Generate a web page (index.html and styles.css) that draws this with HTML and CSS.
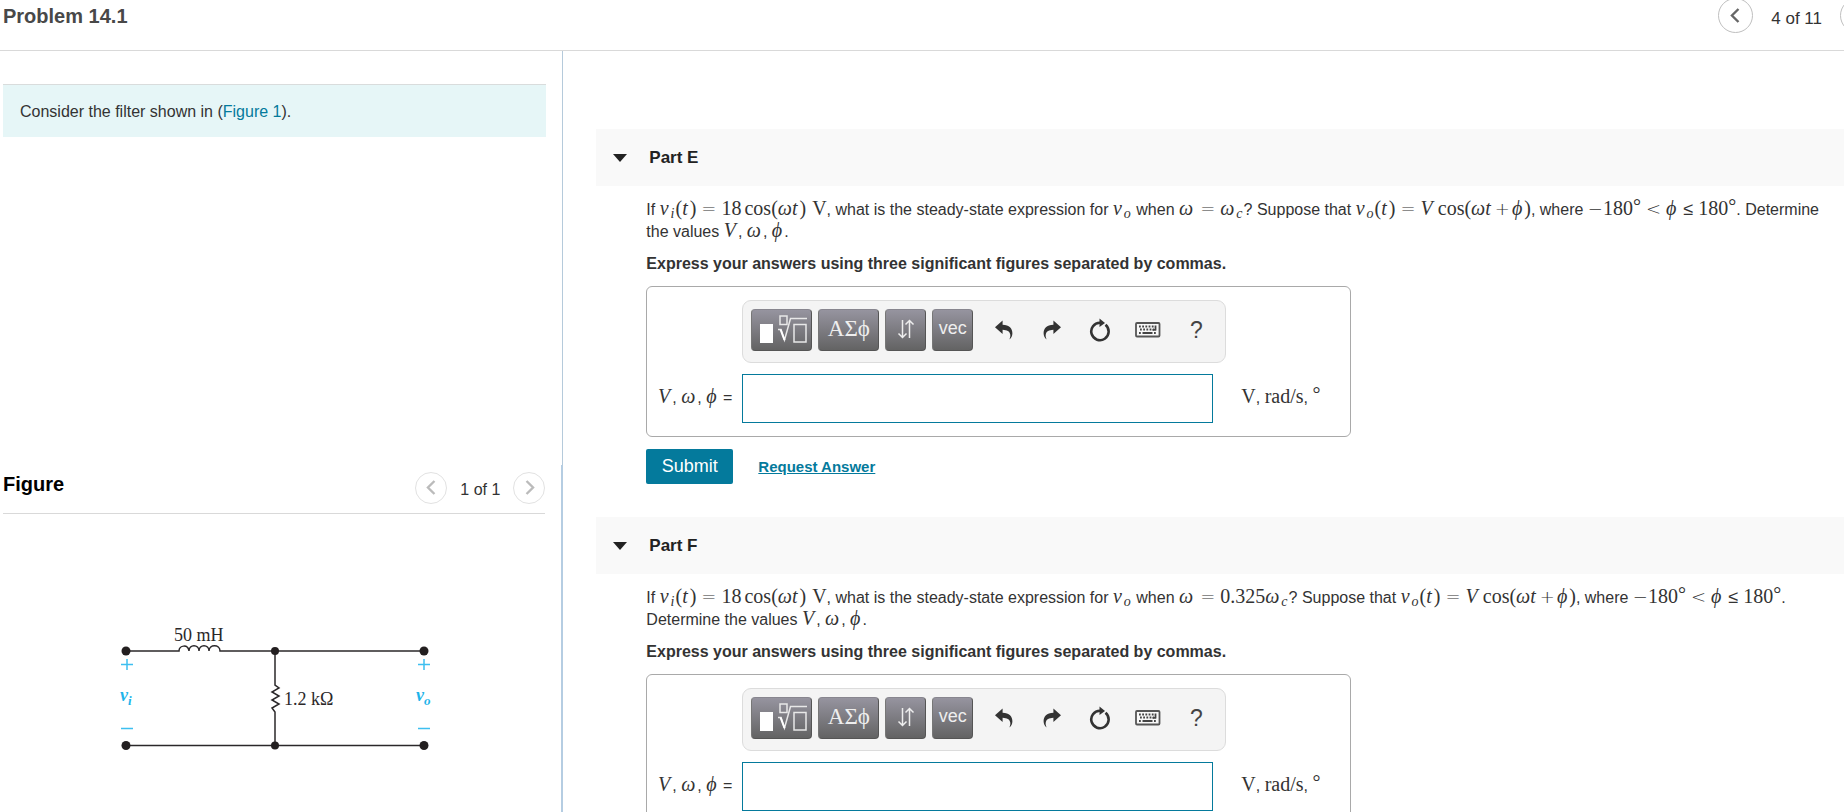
FILE: index.html
```html
<!DOCTYPE html>
<html lang="en">
<head>
<meta charset="utf-8">
<title>Problem 14.1</title>
<link rel="stylesheet" href="styles.css">
</head>
<body>
<svg class="sprite" aria-hidden="true">
  <symbol id="left" viewBox="0 0 16 16"><path d="M10.500 2.500 5 8l5.500 5.500" fill="none" stroke="currentColor" stroke-width="2"/></symbol>
  <symbol id="right" viewBox="0 0 16 16"><path d="M5.500 2.500 11 8l-5.500 5.500" fill="none" stroke="currentColor" stroke-width="2"/></symbol>
  <symbol id="template" viewBox="0 0 50 30">
    <rect x="3" y="10" width="13" height="19" fill="#fff"/>
    <g fill="none" stroke="#e8e8e8" stroke-width="1.500"><rect x="23" y="2" width="7" height="8.500"/><path d="M21 15.500h3l3.500 10.500 6-21.500H50"/><rect x="37" y="10.500" width="12" height="17.500"/></g>
    <path d="M23.500 15.500l4 10.500" stroke="#fff" stroke-width="2"/>
  </symbol>
  <symbol id="arrows" viewBox="0 0 18 22"><path d="M5.500 2v17M1.500 15.500l4 4 4-4M12.500 20V3M8.500 6.500l4-4 4 4" fill="none" stroke="#eee" stroke-width="1.500"/></symbol>
  <symbol id="undo" viewBox="0 0 18 20"><path d="M0 7.200 7.600.5v4.300c6.800.3 9.800 3.600 9.800 8.500 0 2.500-1 4.600-3 6.200.8-2 1.200-3.700.8-5.300-.7-2.900-3-4.300-7.600-4.500V14z" fill="#333"/></symbol>
  <symbol id="reset" viewBox="0 0 22 24"><path d="M16.500 6.800A8.700 8.700 0 1 1 11 4.800" fill="none" stroke="#333" stroke-width="2.600"/><path d="M10.500.5 16 5l-5.500 4z" fill="#333"/></symbol>
  <symbol id="keys" viewBox="0 0 26 16">
    <rect x="1" y="1" width="23.500" height="13.500" rx="1" fill="#f8f8f8" stroke="#555" stroke-width="1.800"/>
    <path d="M4 4.500h15M5 7.500h14M4 11h2M19 11h2" stroke="#444" stroke-width="1.800" stroke-dasharray="1.800 1.400"/>
    <path d="M7.500 11h10M17.500 7.800h3.500M20.500 3.500v5" stroke="#444" stroke-width="1.800"/>
  </symbol>
</svg>

<header class="topbar">
  <h1 class="title">Problem 14.1</h1>
  <nav class="pager pager-top">
    <button class="round" aria-label="Previous problem"><svg class="chev"><use href="#left"/></svg></button>
    <span class="count">4 of 11</span>
    <button class="round" aria-label="Next problem"><svg class="chev"><use href="#right"/></svg></button>
  </nav>
</header>

<div class="panes">
  <aside class="side">
    <section class="intro">
      <p class="note">Consider the filter shown in (<a class="link" href="#figure">Figure 1</a>).</p>
    </section>
    <section class="figure" id="figure">
      <div class="fighead">
        <h2 class="figtitle">Figure</h2>
        <nav class="pager pager-fig">
          <button class="round faint" aria-label="Previous figure"><svg class="chev"><use href="#left"/></svg></button>
          <span class="count">1 of 1</span>
          <button class="round faint" aria-label="Next figure"><svg class="chev"><use href="#right"/></svg></button>
        </nav>
      </div>
      <svg class="circuit" viewBox="115 620 325 140" role="img" aria-label="Filter circuit">
        <g fill="none" stroke="#2b282a" stroke-width="1.500">
          <path d="M126 652h53c0-6 9-7 10 0c0-7 10-7 10 0c0-7 10-7 10 0c0-7 11-7 11 0h204M126 746.500h298"/>
          <path d="M275 652v34l4 3-7 4 7 4-7 4 7 4-7 4 3 4v33.500"/>
        </g>
        <g fill="#231f20"><circle cx="126" cy="652" r="4.500"/><circle cx="275" cy="652" r="4"/><circle cx="424" cy="652" r="4.500"/><circle cx="126" cy="746.500" r="4.500"/><circle cx="275" cy="746.500" r="4"/><circle cx="424" cy="746.500" r="4.500"/></g>
        <path d="M121 665.500h12M127 660v11M418 665.500h12M424 660v11M121 729.500h12M418 729.500h12" stroke="#3dbff0" stroke-width="1.500"/>
        <text class="part-label" x="174" y="642">50 mH</text>
        <text class="part-label" x="284" y="706">1.2 kΩ</text>
        <text class="volt" x="120" y="702">v<tspan class="volt-sub" dy="4">i</tspan></text>
        <text class="volt" x="416" y="702">v<tspan class="volt-sub" dy="4">o</tspan></text>
      </svg>
    </section>
  </aside>

  <main class="work">
    <section class="part">
      <h2 class="parthead"><span class="caret"></span>Part E</h2>
      <div class="partbody">
        <p class="question">If <span class="m"><i>v</i><sub>i</sub>(<i>t</i>)<span class="rel">=</span>18<span class="fn">cos</span>(<i>ωt</i>)<span class="unit">V</span></span>, what is the steady-state expression for <span class="m"><i>v</i><sub>o</sub></span> when <span class="m"><i>ω</i><span class="rel">=</span><i>ω</i><sub>c</sub></span>? Suppose that <span class="m"><i>v</i><sub>o</sub>(<i>t</i>)<span class="rel">=</span><i>V</i><span class="fn">cos</span>(<i>ωt</i><span class="op">+</span><i>ϕ</i>)</span>, where <span class="m"><span class="neg">−</span>180<span class="deg">°</span><span class="rel">&lt;</span><i>ϕ</i><span class="rel">≤</span>180<span class="deg">°</span></span>. Determine the values <span class="m"><i>V</i></span>, <span class="m"><i>ω</i></span>, <span class="m"><i>ϕ</i></span>.</p>
        <p class="instruct">Express your answers using three significant figures separated by commas.</p>
        <form class="answer">
          <div class="tools">
            <button type="button" class="key key-wide" aria-label="Templates"><svg class="i-template"><use href="#template"/></svg></button>
            <button type="button" class="key key-wide greek">ΑΣϕ</button>
            <button type="button" class="key" aria-label="Sub and superscript"><svg class="i-arrows"><use href="#arrows"/></svg></button>
            <button type="button" class="key">vec</button>
            <button type="button" class="tool" aria-label="Undo"><svg class="i-undo"><use href="#undo"/></svg></button>
            <button type="button" class="tool" aria-label="Redo"><svg class="i-undo flip"><use href="#undo"/></svg></button>
            <button type="button" class="tool" aria-label="Reset"><svg class="i-reset"><use href="#reset"/></svg></button>
            <button type="button" class="tool" aria-label="Keyboard shortcuts"><svg class="i-keys"><use href="#keys"/></svg></button>
            <button type="button" class="tool">?</button>
          </div>
          <label class="lhs" for="ans-e"><span class="m"><i>V</i></span>, <span class="m"><i>ω</i></span>, <span class="m"><i>ϕ</i></span> =</label>
          <input class="field" id="ans-e" type="text">
          <span class="units"><span class="m">V</span>, <span class="m">rad/s</span>, <span class="m deg">°</span></span>
        </form>
        <div class="actions"><button class="submit">Submit</button><a class="request" href="#request">Request Answer</a></div>
      </div>
    </section>

    <section class="part">
      <h2 class="parthead"><span class="caret"></span>Part F</h2>
      <div class="partbody">
        <p class="question">If <span class="m"><i>v</i><sub>i</sub>(<i>t</i>)<span class="rel">=</span>18<span class="fn">cos</span>(<i>ωt</i>)<span class="unit">V</span></span>, what is the steady-state expression for <span class="m"><i>v</i><sub>o</sub></span> when <span class="m"><i>ω</i><span class="rel">=</span>0.325<i>ω</i><sub>c</sub></span>? Suppose that <span class="m"><i>v</i><sub>o</sub>(<i>t</i>)<span class="rel">=</span><i>V</i><span class="fn">cos</span>(<i>ωt</i><span class="op">+</span><i>ϕ</i>)</span>, where <span class="m"><span class="neg">−</span>180<span class="deg">°</span><span class="rel">&lt;</span><i>ϕ</i><span class="rel">≤</span>180<span class="deg">°</span></span>. Determine the values <span class="m"><i>V</i></span>, <span class="m"><i>ω</i></span>, <span class="m"><i>ϕ</i></span>.</p>
        <p class="instruct">Express your answers using three significant figures separated by commas.</p>
        <form class="answer">
          <div class="tools">
            <button type="button" class="key key-wide" aria-label="Templates"><svg class="i-template"><use href="#template"/></svg></button>
            <button type="button" class="key key-wide greek">ΑΣϕ</button>
            <button type="button" class="key" aria-label="Sub and superscript"><svg class="i-arrows"><use href="#arrows"/></svg></button>
            <button type="button" class="key">vec</button>
            <button type="button" class="tool" aria-label="Undo"><svg class="i-undo"><use href="#undo"/></svg></button>
            <button type="button" class="tool" aria-label="Redo"><svg class="i-undo flip"><use href="#undo"/></svg></button>
            <button type="button" class="tool" aria-label="Reset"><svg class="i-reset"><use href="#reset"/></svg></button>
            <button type="button" class="tool" aria-label="Keyboard shortcuts"><svg class="i-keys"><use href="#keys"/></svg></button>
            <button type="button" class="tool">?</button>
          </div>
          <label class="lhs" for="ans-f"><span class="m"><i>V</i></span>, <span class="m"><i>ω</i></span>, <span class="m"><i>ϕ</i></span> =</label>
          <input class="field" id="ans-f" type="text">
          <span class="units"><span class="m">V</span>, <span class="m">rad/s</span>, <span class="m deg">°</span></span>
        </form>
      </div>
    </section>
  </main>
</div>
</body>
</html>
```

FILE: styles.css
```css
* { box-sizing: border-box; }
body {
  margin: 0;
  height: 100vh;
  display: flex;
  flex-direction: column;
  overflow: hidden;
  background: #fff;
  color: #333;
  font: 16px/22px "Liberation Sans", Arial, sans-serif;
}
h1, h2, p { margin: 0; }
button { font-family: inherit; padding: 0; }
svg { display: block; }
.sprite { position: absolute; width: 0; height: 0; }

/* Top bar */
.topbar {
  flex: none;
  display: flex;
  justify-content: space-between;
  height: 51px;
  padding-left: 3px;
  border-bottom: 1px solid #d9d9d9;
  overflow: hidden;
}
.title { color: #484848; font-size: 20px; line-height: 32px; }
.pager { display: flex; align-items: center; }
.pager-top { height: 31px; margin-right: -31px; gap: 18px; font-size: 17px; }
.pager-top .count { padding-top: 6px; }
.pager-fig { gap: 13px; }
.pager-fig .count { padding-top: 4px; }
.round {
  display: flex;
  align-items: center;
  justify-content: center;
  width: 35px;
  height: 35px;
  border: 1px solid #bfbfbf;
  border-radius: 50%;
  background: #fff;
  color: #666;
}
.faint { width: 32px; height: 32px; border-color: #e2e2e2; color: #bbb; }
.chev { width: 19px; height: 19px; }

/* Panes */
.panes { flex: 1; min-height: 0; display: grid; grid-template-columns: 30.55% 1fr; }
.side { display: grid; grid-template-rows: 544fr 456fr; min-height: 0; }
.intro { padding: 33px 16px 0 3px; border-right: 1px solid #b5cadb; }
.note {
  padding: 16px 17px 14px;
  border-top: 1px solid #d9dcdc;
  background: #e6f6f7;
}
.link { color: #047a9c; text-decoration: none; }
.figure { padding: 0 16px 0 3px; border-right: 2px solid #b5cde2; min-height: 0; }
.fighead {
  display: flex;
  justify-content: space-between;
  height: 49px;
  padding-top: 7px;
  border-bottom: 1px solid #d9d9d9;
}
.pager-fig { height: 32px; }
.figtitle { color: #000; font-size: 20px; line-height: 24px; }
.circuit { width: 325px; height: 140px; margin: 105px 0 0 112px; }
.part-label { font: 18px "Liberation Serif", serif; fill: #2b282a; }
.volt { font: italic bold 18px "Liberation Serif", serif; fill: #1eb4ea; }
.volt-sub { font-size: 13px; }

/* Parts */
.work { padding: 78px 0 0 33px; min-width: 0; min-height: 0; overflow: hidden; }
.part { margin-bottom: 33px; }
.parthead {
  display: flex;
  align-items: center;
  gap: 22px;
  height: 57px;
  padding-left: 17px;
  background: #f9f9f9;
  color: #222;
  font-size: 17px;
}
.caret { border: 7px solid transparent; border-top: 8px solid #222; border-bottom: 0; }
.partbody { padding: 13px 12px 0 50px; }
.instruct { margin: 10px 0 11px; font-weight: bold; }

/* Math */
.m { font-family: "Liberation Serif", "DejaVu Serif", serif; font-size: 20px; line-height: 16px; white-space: nowrap; }
.m i { padding-right: 2px; }
.m sub { font-size: 14px; font-style: italic; line-height: 8px; vertical-align: -3px; padding-right: 1px; }
.deg { font-size: 20px; line-height: 12px; vertical-align: 2px; }
.rel, .op, .neg { font-family: "DejaVu Sans", sans-serif; font-weight: 200; font-size: 18px; line-height: 12px; }
.rel { margin: 0 5px; }
.op { margin: 0 2px; }
.fn { margin-left: 3px; }
.unit { margin-left: 6px; }

/* Answer box */
.answer {
  display: grid;
  grid-template-columns: 80px 1fr 122px;
  column-gap: 15px;
  width: 705px;
  max-width: 100%;
  padding: 13px 0;
  border: 1px solid #a9a9a9;
  border-radius: 6px;
}
.tools {
  grid-column: 2 / 4;
  justify-self: start;
  display: flex;
  height: 63px;
  padding: 8px;
  gap: 6px;
  border: 1px solid #dcdcdc;
  border-radius: 9px;
  background: #f4f4f4;
}
.key {
  display: flex;
  align-items: center;
  justify-content: center;
  width: 41px;
  height: 42px;
  padding-bottom: 3px;
  border: 1px solid #777;
  border-color: #88868f #555 #555 #777;
  border-radius: 4px;
  background: linear-gradient(#96949f, #636363);
  color: #eee;
  font-size: 18px;
}
.key-wide { width: 61px; }
.greek { font-family: "Liberation Serif", serif; font-size: 23px; }
.i-template { width: 50px; height: 30px; }
.i-arrows { width: 18px; height: 22px; }
.tool {
  display: flex;
  align-items: center;
  justify-content: center;
  width: 42px;
  height: 42px;
  border: 0;
  background: none;
  color: #444;
  font-size: 23px;
}
.key + .tool { margin-left: 4px; }
.i-undo { width: 18px; height: 20px; }
.flip { transform: scaleX(-1); }
.i-reset { width: 22px; height: 24px; }
.i-keys { width: 26px; height: 16px; }
.lhs { grid-column: 1; justify-self: end; margin: 24px -5px 0 0; white-space: nowrap; }
.field {
  width: 100%;
  min-width: 0;
  height: 49px;
  margin-top: 11px;
  padding: 0 8px;
  border: 1px solid #047a9c;
  border-radius: 0;
  background: #fff;
  font-size: 20px;
}
.units { margin: 24px 0 0 13px; white-space: nowrap; }
.actions { display: flex; align-items: center; gap: 25px; margin-top: 12px; }
.submit {
  width: 87px;
  height: 35px;
  border: 0;
  border-radius: 2px;
  background: #047a9c;
  color: #fff;
  font-size: 18px;
}
.request { color: #047a9c; font-size: 15px; font-weight: bold; }
```
